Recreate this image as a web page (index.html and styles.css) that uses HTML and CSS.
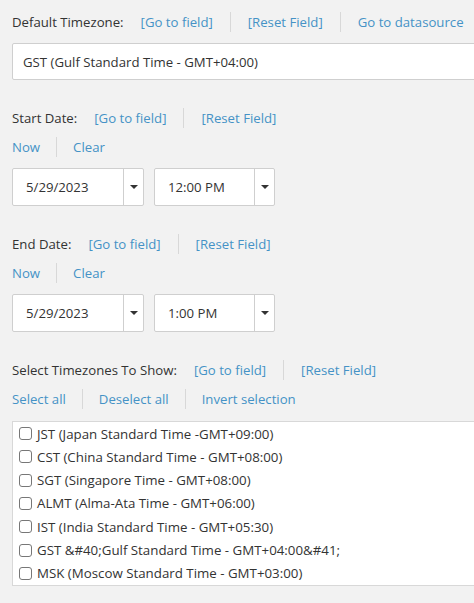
FILE: index.html
```html
<!DOCTYPE html>
<html>
<head>
<meta charset="utf-8">
<link rel="stylesheet" href="styles.css">
</head>
<body>
<div class="page">
  <div class="row label-row">
    <span class="label">Default Timezone:</span>
    <a class="link">[Go to field]</a>
    <span class="sep"></span>
    <a class="link">[Reset Field]</a>
    <span class="sep"></span>
    <a class="link">Go to datasource</a>
  </div>
  <div class="textbox wide">GST (Gulf Standard Time - GMT+04:00)</div>

  <div class="row label-row section">
    <span class="label">Start Date:</span>
    <a class="link">[Go to field]</a>
    <span class="sep"></span>
    <a class="link">[Reset Field]</a>
  </div>
  <div class="row action-row">
    <a class="link">Now</a>
    <span class="sep"></span>
    <a class="link">Clear</a>
  </div>
  <div class="pickers">
    <div class="picker date"><span class="value">5/29/2023</span><span class="drop"><span class="caret"></span></span></div>
    <div class="picker time"><span class="value">12:00 PM</span><span class="drop"><span class="caret"></span></span></div>
  </div>

  <div class="row label-row section">
    <span class="label">End Date:</span>
    <a class="link">[Go to field]</a>
    <span class="sep"></span>
    <a class="link">[Reset Field]</a>
  </div>
  <div class="row action-row">
    <a class="link">Now</a>
    <span class="sep"></span>
    <a class="link">Clear</a>
  </div>
  <div class="pickers">
    <div class="picker date"><span class="value">5/29/2023</span><span class="drop"><span class="caret"></span></span></div>
    <div class="picker time"><span class="value">1:00 PM</span><span class="drop"><span class="caret"></span></span></div>
  </div>

  <div class="row label-row section">
    <span class="label">Select Timezones To Show:</span>
    <a class="link">[Go to field]</a>
    <span class="sep"></span>
    <a class="link">[Reset Field]</a>
  </div>
  <div class="row action-row">
    <a class="link">Select all</a>
    <span class="sep"></span>
    <a class="link">Deselect all</a>
    <span class="sep"></span>
    <a class="link">Invert selection</a>
  </div>
  <div class="checklist">
    <label class="item"><span class="box"></span>JST (Japan Standard Time -GMT+09:00)</label>
    <label class="item"><span class="box"></span>CST (China Standard Time - GMT+08:00)</label>
    <label class="item"><span class="box"></span>SGT (Singapore Time - GMT+08:00)</label>
    <label class="item"><span class="box"></span>ALMT (Alma-Ata Time - GMT+06:00)</label>
    <label class="item"><span class="box"></span>IST (India Standard Time - GMT+05:30)</label>
    <label class="item"><span class="box"></span>GST &amp;#40;Gulf Standard Time - GMT+04:00&amp;#41;</label>
    <label class="item"><span class="box"></span>MSK (Moscow Standard Time - GMT+03:00)</label>
  </div>
</div>
</body>
</html>
```
FILE: styles.css
```css
html, body {
  margin: 0;
  padding: 0;
  background: #f2f2f2;
  overflow: hidden;
}
body {
  width: 474px;
  height: 603px;
  font-family: "Open Sans", "Noto Sans", sans-serif;
  font-size: 13.2px;
  color: #333;
}
.page {
  padding: 12px 0 0 12px;
  display: flex;
  flex-direction: column;
}
.row {
  display: flex;
  align-items: center;
  gap: 17px;
  height: 20px;
  white-space: nowrap;
}
.section { margin-top: 28px; }
.action-row { margin-top: 9px; gap: 16px; }
.label { color: #333; }
.link { color: #4592c6; cursor: pointer; }
.sep {
  width: 1px;
  height: 20px;
  background: #d8d8d8;
}
.textbox {
  margin-top: 11px;
  box-sizing: border-box;
  width: 480px;
  height: 37px;
  background: #fff;
  border: 1px solid #cfcfcf;
  border-radius: 2px;
  padding-left: 10px;
  display: flex;
  align-items: center;
  white-space: nowrap;
}
.pickers {
  margin-top: 11px;
  display: flex;
  gap: 10px;
}
.picker {
  box-sizing: border-box;
  height: 38px;
  background: #fff;
  border: 1px solid #cfcfcf;
  border-radius: 2px;
  display: flex;
  align-items: stretch;
}
.picker.date { width: 132px; }
.picker.time { width: 121px; }
.value {
  flex: 1;
  display: flex;
  align-items: center;
  padding-left: 13px;
  font-size: 13.2px;
}
.drop {
  width: 19px;
  border-left: 1px solid #cfcfcf;
  display: flex;
  align-items: center;
  justify-content: center;
}
.caret {
  width: 0;
  height: 0;
  border-left: 4px solid transparent;
  border-right: 4px solid transparent;
  border-top: 4px solid #333;
}
.checklist {
  margin-top: 12px;
  box-sizing: border-box;
  width: 480px;
  height: 165px;
  background: #fff;
  border: 1px solid #d8d8d8;
  padding: 0 0 0 6px;
  display: flex;
  flex-direction: column;
}
.item {
  height: 23.3px;
  display: flex;
  align-items: center;
  white-space: nowrap;
  font-size: 13.3px;
}
.box {
  box-sizing: border-box;
  width: 13px;
  height: 13px;
  border: 1px solid #777;
  border-radius: 3px;
  background: #fff;
  margin-right: 5px;
}
```
